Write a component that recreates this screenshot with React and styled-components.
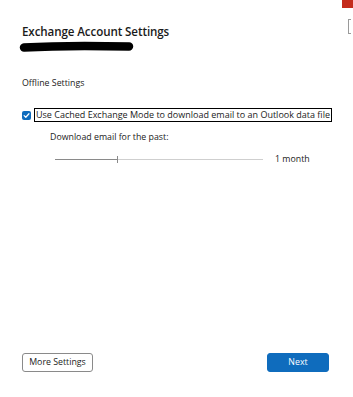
import React from "react";
import styled, { createGlobalStyle } from "styled-components";

const GlobalStyle = createGlobalStyle`
  html, body, #root {
    margin: 0;
    padding: 0;
    width: 100%;
    height: 100%;
    background: #fff;
  }
  body {
    font-family: "Open Sans", "Noto Sans", sans-serif;
    color: #1b1b1b;
  }
`;

const Window = styled.div`
  position: relative;
  width: 353px;
  height: 397px;
  overflow: hidden;
  display: flex;
  flex-direction: column;
  padding: 23px 0 25px 22px;
  box-sizing: border-box;
  background: #fff;
`;

const Title = styled.h1`
  margin: 0;
  font-size: 11.6px;
  font-weight: 600;
  letter-spacing: -0.1px;
  line-height: 17px;
  color: #1a1a1a;
`;

const Redaction = styled.svg`
  display: block;
  margin: 1px 0 0 -3px;
`;

const SectionLabel = styled.div`
  margin-top: 24px;
  font-size: 8.8px;
  line-height: 12px;
  color: #222;
`;

const CheckRow = styled.label`
  margin-top: 19px;
  display: flex;
  align-items: center;
  gap: 3px;
`;

const Box = styled.span`
  width: 9px;
  height: 9px;
  border-radius: 2px;
  background: #0f6cbd;
  display: flex;
  align-items: center;
  justify-content: center;
`;

const FocusText = styled.span`
  border: 1px solid #000;
  padding: 0 1px;
  font-size: 9px;
  line-height: 12px;
  white-space: nowrap;
  color: #1b1b1b;
`;

const Indent = styled.div`
  padding-left: 28px;
  margin-top: 9px;
`;

const SubLabel = styled.div`
  font-size: 8.8px;
  line-height: 12px;
  color: #222;
`;

const SliderRow = styled.div`
  margin-top: 10px;
  display: flex;
  align-items: center;
  gap: 12px;
  padding-left: 5px;
`;

const Track = styled.div`
  position: relative;
  width: 208px;
  height: 1px;
  background: #cfcfcf;
`;

const Filled = styled.div`
  height: 1px;
  background: #8a8a8a;
`;

const Thumb = styled.div`
  position: absolute;
  top: -3px;
  width: 1px;
  height: 7px;
  background: #8a8a8a;
`;

const Value = styled.span`
  font-size: 8.8px;
  line-height: 12px;
  color: #222;
`;

const Footer = styled.div`
  margin-top: auto;
  display: flex;
  justify-content: space-between;
  align-items: center;
  padding-right: 24px;
`;

const Button = styled.button`
  height: 19px;
  box-sizing: border-box;
  border-radius: 3px;
  font-family: inherit;
  font-size: 8.8px;
  line-height: 1;
  padding: 0;
  cursor: pointer;
  border: 1px solid ${(p) => (p.$primary ? "#0f6cbd" : "#8a8a8a")};
  background: ${(p) => (p.$primary ? "#0f6cbd" : "#fff")};
  color: ${(p) => (p.$primary ? "#fff" : "#1b1b1b")};
  width: ${(p) => p.$width}px;
`;

const CloseCorner = styled.div`
  position: absolute;
  top: 0;
  right: 0;
  width: 11px;
  height: 8px;
  background: #c42b1c;
`;

const RestoreEdge = styled.div`
  position: absolute;
  top: 19px;
  right: 2px;
  width: 2px;
  height: 13px;
  border: 1px solid #9a9a9a;
  border-right: none;
`;

export default function App() {
  const months = 0.3;
  return (
    <>
      <GlobalStyle />
      <Window>
        <CloseCorner />
        <RestoreEdge />
        <Title>Exchange Account Settings</Title>
        <Redaction width="116" height="12" viewBox="0 0 116 12">
          <path
            d="M5 6.5 C 30 5, 70 4.5, 110 5.5"
            stroke="#000"
            strokeWidth="8.5"
            strokeLinecap="round"
            fill="none"
          />
        </Redaction>
        <SectionLabel>Offline Settings</SectionLabel>
        <CheckRow>
          <Box>
            <svg width="7" height="7" viewBox="0 0 8 8">
              <path
                d="M1.3 4.2 L3.2 6 L6.8 2"
                stroke="#fff"
                strokeWidth="1.4"
                fill="none"
                strokeLinecap="round"
                strokeLinejoin="round"
              />
            </svg>
          </Box>
          <FocusText>
            Use Cached Exchange Mode to download email to an Outlook data file
          </FocusText>
        </CheckRow>
        <Indent>
          <SubLabel>Download email for the past:</SubLabel>
          <SliderRow>
            <Track>
              <Filled style={{ width: `${months * 208}px` }} />
              <Thumb style={{ left: `${months * 208}px` }} />
            </Track>
            <Value>1 month</Value>
          </SliderRow>
        </Indent>
        <Footer>
          <Button $width={71}>More Settings</Button>
          <Button $primary $width={62}>
            Next
          </Button>
        </Footer>
      </Window>
    </>
  );
}
